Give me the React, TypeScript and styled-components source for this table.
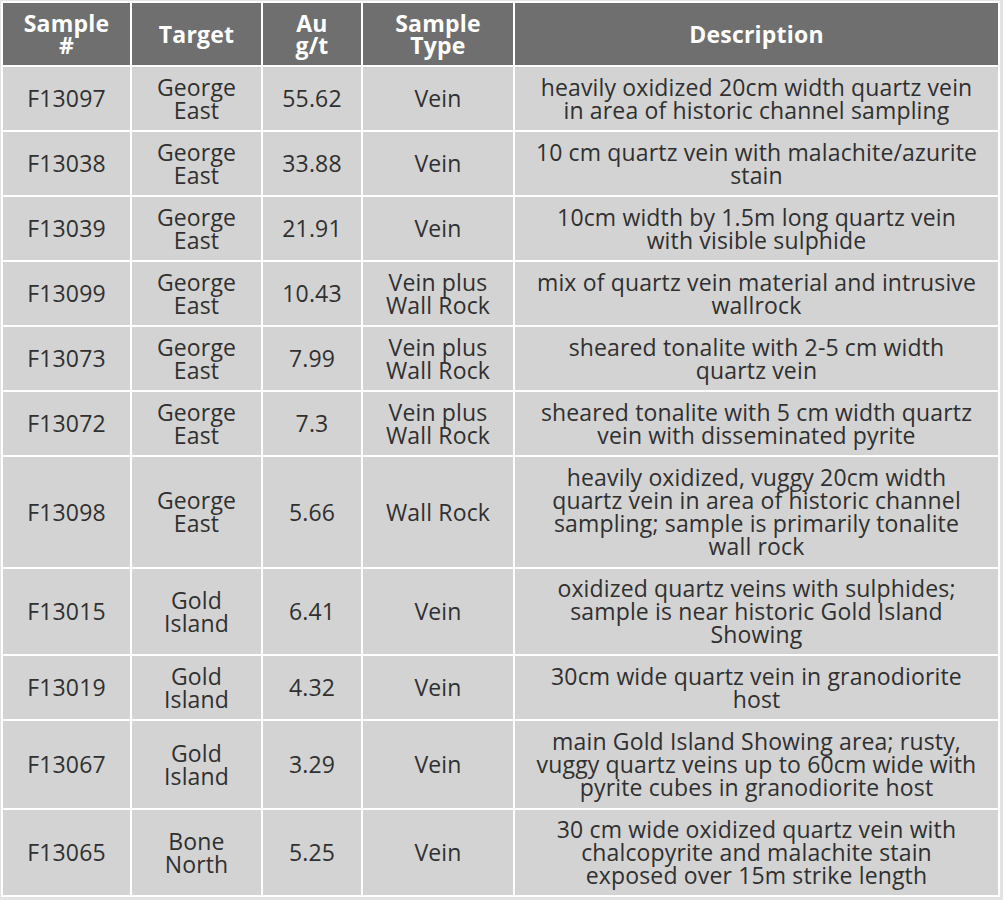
import React from "react";
import styled, { createGlobalStyle } from "styled-components";

const Global = createGlobalStyle`
  html, body { margin: 0; padding: 0; background: #e3e3e3; }
  body { font-family: "Open Sans", "Liberation Sans", sans-serif; }
`;

const Frame = styled.div`
  width: 1003px;
  height: 900px;
  padding: 1px 0 0 1px;
  box-sizing: border-box;
`;

const Table = styled.table`
  border-collapse: separate;
  border-spacing: 2px;
  background: #ffffff;
  table-layout: fixed;
  width: 999px;
`;

const HeadCell = styled.th<{ $w: number }>`
  width: ${(p) => p.$w}px;
  height: 62px;
  padding: 0;
  background: #6f6f6f;
  color: #ffffff;
  font-weight: 700;
  font-size: 23px;
  line-height: 22px;
  letter-spacing: 0.2px;
  text-align: center;
  vertical-align: middle;
`;

const Row = styled.tr<{ $h: number }>`
  height: ${(p) => p.$h}px;
`;

const Cell = styled.td`
  padding: 0;
  background: #d3d3d3;
  color: #303030;
  font-size: 23px;
  line-height: 23px;
  letter-spacing: 0.15px;
  text-align: center;
  vertical-align: middle;
  white-space: nowrap;
`;

const Line = styled.div``;

type R = { id: string; target: string[]; au: string; type: string[]; desc: string[]; h: number };

const rows: R[] = [
  { id: "F13097", target: ["George", "East"], au: "55.62", type: ["Vein"], desc: ["heavily oxidized 20cm width quartz vein", "in area of historic channel sampling"], h: 63 },
  { id: "F13038", target: ["George", "East"], au: "33.88", type: ["Vein"], desc: ["10 cm quartz vein with malachite/azurite", "stain"], h: 63 },
  { id: "F13039", target: ["George", "East"], au: "21.91", type: ["Vein"], desc: ["10cm width by 1.5m long quartz vein", "with visible sulphide"], h: 63 },
  { id: "F13099", target: ["George", "East"], au: "10.43", type: ["Vein plus", "Wall Rock"], desc: ["mix of quartz vein material and intrusive", "wallrock"], h: 63 },
  { id: "F13073", target: ["George", "East"], au: "7.99", type: ["Vein plus", "Wall Rock"], desc: ["sheared tonalite with 2-5 cm width", "quartz vein"], h: 63 },
  { id: "F13072", target: ["George", "East"], au: "7.3", type: ["Vein plus", "Wall Rock"], desc: ["sheared tonalite with 5 cm width quartz", "vein with disseminated pyrite"], h: 63 },
  { id: "F13098", target: ["George", "East"], au: "5.66", type: ["Wall Rock"], desc: ["heavily oxidized, vuggy 20cm width", "quartz vein in area of historic channel", "sampling; sample is primarily tonalite", "wall rock"], h: 110 },
  { id: "F13015", target: ["Gold", "Island"], au: "6.41", type: ["Vein"], desc: ["oxidized quartz veins with sulphides;", "sample is near historic Gold Island", "Showing"], h: 85 },
  { id: "F13019", target: ["Gold", "Island"], au: "4.32", type: ["Vein"], desc: ["30cm wide quartz vein in granodiorite", "host"], h: 63 },
  { id: "F13067", target: ["Gold", "Island"], au: "3.29", type: ["Vein"], desc: ["main Gold Island Showing area; rusty,", "vuggy quartz veins up to 60cm wide with", "pyrite cubes in granodiorite host"], h: 87 },
  { id: "F13065", target: ["Bone", "North"], au: "5.25", type: ["Vein"], desc: ["30 cm wide oxidized quartz vein with", "chalcopyrite and malachite stain", "exposed over 15m strike length"], h: 85 },
];

const Lines = ({ items }: { items: string[] }) => (
  <>
    {items.map((t, i) => (
      <Line key={i}>{t}</Line>
    ))}
  </>
);

export default function App() {
  return (
    <>
      <Global />
      <Frame>
        <Table>
          <thead>
            <tr>
              <HeadCell $w={127}><Lines items={["Sample", "#"]} /></HeadCell>
              <HeadCell $w={129}>Target</HeadCell>
              <HeadCell $w={98}><Lines items={["Au", "g/t"]} /></HeadCell>
              <HeadCell $w={150}><Lines items={["Sample", "Type"]} /></HeadCell>
              <HeadCell $w={483}>Description</HeadCell>
            </tr>
          </thead>
          <tbody>
            {rows.map((r) => (
              <Row key={r.id} $h={r.h}>
                <Cell>{r.id}</Cell>
                <Cell><Lines items={r.target} /></Cell>
                <Cell>{r.au}</Cell>
                <Cell><Lines items={r.type} /></Cell>
                <Cell><Lines items={r.desc} /></Cell>
              </Row>
            ))}
          </tbody>
        </Table>
      </Frame>
    </>
  );
}
